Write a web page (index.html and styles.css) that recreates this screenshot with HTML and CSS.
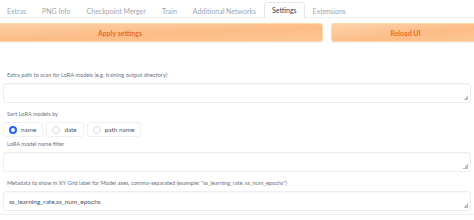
FILE: index.html
```html
<!DOCTYPE html>
<html lang="en">
<head>
    <meta charset="UTF-8">
    <title>Settings</title>
    <link rel="stylesheet" href="styles.css">
</head>
<body>
    <div class="tab-nav">
        <button class="tab">Extras</button>
        <button class="tab">PNG Info</button>
        <button class="tab">Checkpoint Merger</button>
        <button class="tab">Train</button>
        <button class="tab">Additional Networks</button>
        <button class="tab selected">Settings</button>
        <button class="tab">Extensions</button>
    </div>

    <div class="actions">
        <button class="btn-primary apply">Apply settings</button>
        <button class="btn-primary reload">Reload UI</button>
    </div>

    <div class="panel">
        <div class="field">
            <label class="field-label">Extra path to scan for LoRA models (e.g. training output directory)</label>
            <div class="input-wrap"><textarea class="text-input" rows="1"></textarea></div>
        </div>

        <div class="field radio-field">
            <span class="field-label">Sort LoRA models by</span>
            <div class="radio-group">
                <label class="radio-item"><input type="radio" name="sort" checked><span>name</span></label>
                <label class="radio-item"><input type="radio" name="sort"><span>date</span></label>
                <label class="radio-item"><input type="radio" name="sort"><span>path name</span></label>
            </div>
        </div>

        <div class="field">
            <label class="field-label">LoRA model name filter</label>
            <div class="input-wrap"><textarea class="text-input" rows="1"></textarea></div>
        </div>

        <div class="field">
            <label class="field-label">Metadata to show in XY Grid label for Model axes, comma-separated (example: "ss_learning_rate, ss_num_epochs")</label>
            <div class="input-wrap"><textarea class="text-input" rows="1">ss_learning_rate,ss_num_epochs</textarea></div>
        </div>
    </div>
</body>
</html>
```

FILE: styles.css
```css
body {
    margin: 0;
    width: 474px;
    overflow: hidden;
    background: white;
    font-family: Lato, "Open Sans", sans-serif;
    color: #374151;
}

.tab-nav {
    display: flex;
    align-items: flex-end;
    height: 17px;
    padding-left: 0;
    border-bottom: 1px solid #eceef1;
    white-space: nowrap;
}
.tab {
    font-family: inherit;
    font-size: 7px;
    color: #a1a6ae;
    background: none;
    border: 1px solid transparent;
    border-bottom: none;
    padding: 0 7px;
    height: 15px;
    line-height: 15px;
    margin: 0 0 -1px 0;
    cursor: pointer;
}
.tab:first-child {
    margin-left: -1px;
}
.tab.selected {
    color: #374151;
    background: white;
    border-color: #e5e7eb;
    border-radius: 3px 3px 0 0;
    height: 16px;
}

.actions {
    display: flex;
    gap: 8px;
    margin: 5px -6px 0 -83px;
}
.btn-primary {
    flex: 1;
    height: 19px;
    font-family: inherit;
    font-size: 7px;
    font-weight: 700;
    color: #ea6f1c;
    border: 1px solid #fed7aa;
    border-radius: 3px;
    background: linear-gradient(to bottom right, #fdd3ab, #fcbc86 60%, #fdc896);
    box-shadow: 0 1px 1px rgba(0, 0, 0, 0.06);
    cursor: pointer;
}
.btn-primary.apply {
    flex: 0 0 406px;
}

.panel {
    padding: 29px 3px 3px;
    border-bottom: 1px solid #eff0f2;
}
.field {
    margin-bottom: 7px;
}
.field:last-child {
    margin-bottom: 0;
}
.radio-field {
    margin-bottom: 3px;
}
.field-label {
    display: block;
    font-size: 5.6px;
    color: #6b7280;
    padding-left: 4px;
    margin-bottom: 4px;
    line-height: 8px;
}
.input-wrap {
    position: relative;
}
.input-wrap::after {
    content: "";
    position: absolute;
    right: 3px;
    bottom: 3px;
    width: 5px;
    height: 5px;
    background: linear-gradient(135deg, transparent 50%, #b9bdc3 50%);
}
.text-input {
    display: block;
    box-sizing: border-box;
    width: 100%;
    height: 20px;
    padding: 6px 5px;
    font-family: inherit;
    font-size: 6.5px;
    color: #4b5563;
    border: 1px solid #eceef1;
    border-radius: 3px;
    box-shadow: inset 0 1px 1px rgba(0, 0, 0, 0.03);
    resize: none;
    outline: none;
}

.radio-group {
    display: flex;
    gap: 3px;
}
.radio-item {
    display: flex;
    align-items: center;
    gap: 4px;
    height: 15px;
    box-sizing: border-box;
    padding: 0 6px 0 5px;
    border: 1px solid #eef0f2;
    border-radius: 3px;
    font-size: 6.4px;
    color: #4b5563;
}
.radio-item input {
    appearance: none;
    margin: 0;
    width: 8px;
    height: 8px;
    border: 1px solid #d9dce1;
    border-radius: 50%;
    box-sizing: border-box;
}
.radio-item input:checked {
    border: 2.5px solid #2563eb;
    background: white;
}
```
